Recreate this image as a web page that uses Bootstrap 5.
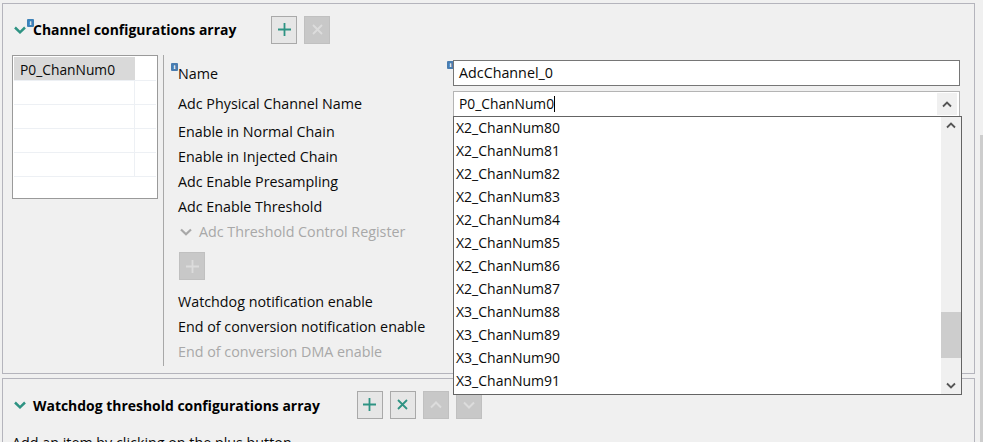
<!doctype html>
<html lang="en"><head><meta charset="utf-8"><title>Channel configurations</title>
<link href="https://cdn.jsdelivr.net/npm/bootstrap@5.3.0/dist/css/bootstrap.min.css" rel="stylesheet">
<style>
html,body{height:442px;overflow:hidden}
body{background:#f0f0f0;color:#0a0a0a;font:14.3px/20px "Open Sans","Noto Sans",sans-serif;position:relative;padding:3px 8px 0 2px}
.pane{border:1px solid #b4b4bc;background:#f0f0f0}
.pane-a{height:371px;padding:12px 9px 0 9px}
.pane-b{height:70px;margin-top:4px;padding:12px 9px 0 9px;border-bottom:0}
.pane-b .title{padding-top:2px}
.head{height:27px;display:flex;align-items:center;position:relative}
.title{font-weight:700;font-size:13.95px;color:#000;margin-left:7px}
.chev{width:12px;height:8px;margin-left:2px;flex:none}
.tool{width:26px;height:28px;border:1px solid #a9a9a9;background:#e6e6e6;display:flex;align-items:center;justify-content:center;padding:0;flex:none}
.tool.off{background:#c8c8c8;border-color:#c0c0c0}
.tools{margin-left:35px;gap:7px}
.pane-b .tools{margin-left:37px}
.info{position:absolute;width:7px;height:8px;background:#4a7db0;color:#fff;font:bold 7px/8px "Liberation Serif",serif;text-align:center;border-radius:1px}
.info-title{left:15px;top:3px;background:#3d82b8}
.main{display:flex;margin-top:12px}
.lst{width:146px;height:144px;flex:none;border:1px solid #9a9a9a;background:#fff;padding:1px}
.lst-row{height:24px;border-bottom:1px solid #edf0f4;display:flex}
.lst-row span{width:121px;padding:3px 0 0 6px;border-right:1px solid #edf0f4;line-height:20px;font-size:13.8px}
.lst-row.sel span{background:#d9d9d9;border-right:0}
.vline{width:1px;height:311px;background:#a8a8a8;margin-left:5px;flex:none}
.form-area{position:relative;flex:1;padding-left:14px}
.lab{display:flex;align-items:center;height:25px;white-space:nowrap}
.dis{color:#a8a8a8}
.r1{height:28px;margin-top:5px}
.r2{height:32px}
.r3{height:24px}
.fld{position:absolute;left:289px;width:507px;background:#fff;padding-left:5px;display:flex;align-items:center}
.fld1{top:5px;height:26px;border:1px solid #767676}
.fld2{top:36px;height:26px;border:1px solid #b4b4b4;justify-content:space-between;padding-right:2px;font-size:13.8px}
.spin{width:20px;height:22px;background:#f0f0f0;display:flex;align-items:center;justify-content:center}
.caret-t{display:inline-block;width:1px;height:16px;background:#000;vertical-align:-3px}
.pop{position:absolute;left:289px;top:61px;width:509px;height:279px;border:1px solid #646464;background:#fff;display:flex;z-index:5;font-size:14px}
.items{flex:1;padding:0 0 0 2px;margin-top:-1px}
.items div{height:23px;line-height:23px}
.sbar{width:20px;background:#f0f0f0;display:flex;flex-direction:column;align-items:center;justify-content:space-between;position:relative;padding:5px 0}
.thumb{position:absolute;left:0;right:0;top:195px;height:46px;background:#cdcdcd}
.add-off{margin:8px 0 9px 1px}
.outer-sb{position:absolute;right:0;top:135px;width:3px;height:307px;background:#cdcdcd}
.hint{margin-top:15px;white-space:nowrap}
.dis-chev{margin:0 7px 0 2px}
</style></head><body>
<section class="pane pane-a">
  <div class="head">
    <svg class="chev" viewBox="0 0 12 8"><path d="M1 1.5 6 6.3 11 1.5" fill="none" stroke="#2e9383" stroke-width="2.5"/></svg>
    <span class="info info-title">i</span>
    <span class="title">Channel configurations array</span>
    <div class="d-flex tools">
      <button class="tool" aria-label="Add"><svg width="15" height="15" viewBox="0 0 15 15"><path d="M7.5 1v13M1 7.5h13" stroke="#2e9383" stroke-width="1.8"/></svg></button>
      <button class="tool off" aria-label="Remove"><svg width="11" height="11" viewBox="0 0 11 11"><path d="M1 1 10 10M10 1 1 10" stroke="#dcdcdc" stroke-width="1.8"/></svg></button>
    </div>
  </div>
  <div class="main">
    <div class="lst">
      <div class="lst-row sel"><span>P0_ChanNum0</span></div>
      <div class="lst-row"><span></span></div>
      <div class="lst-row"><span></span></div>
      <div class="lst-row"><span></span></div>
      <div class="lst-row"><span></span></div>
    </div>
    <div class="vline"></div>
    <div class="form-area">
      <span class="info" style="left:7px;top:8px">i</span>
      <div class="lab r1">Name</div>
      <div class="lab r2">Adc Physical Channel Name</div>
      <div class="lab r3">Enable in Normal Chain</div>
      <div class="lab">Enable in Injected Chain</div>
      <div class="lab">Adc Enable Presampling</div>
      <div class="lab">Adc Enable Threshold</div>
      <div class="lab dis">
        <svg class="dis-chev" width="12" height="8" viewBox="0 0 12 8"><path d="M1 1.5 6 6.3 11 1.5" fill="none" stroke="#a8a8a8" stroke-width="2.2"/></svg>Adc Threshold Control Register
      </div>
      <button class="tool off add-off d-flex" aria-label="Add register"><svg width="15" height="15" viewBox="0 0 15 15"><path d="M7.5 1v13M1 7.5h13" stroke="#dcdcdc" stroke-width="1.8"/></svg></button>
      <div class="lab">Watchdog notification enable</div>
      <div class="lab">End of conversion notification enable</div>
      <div class="lab dis">End of conversion DMA enable</div>

      <span class="info" style="left:283px;top:6px">i</span>
      <div class="fld fld1">AdcChannel_0</div>
      <div class="fld fld2"><span>P0_ChanNum0<i class="caret-t"></i></span>
        <span class="spin"><svg width="10" height="7" viewBox="0 0 10 7"><path d="M1 5.5 5 1.5 9 5.5" fill="none" stroke="#555" stroke-width="1.8"/></svg></span>
      </div>
      <div class="pop">
        <div class="items">
          <div>X2_ChanNum80</div><div>X2_ChanNum81</div><div>X2_ChanNum82</div><div>X2_ChanNum83</div>
          <div>X2_ChanNum84</div><div>X2_ChanNum85</div><div>X2_ChanNum86</div><div>X2_ChanNum87</div>
          <div>X3_ChanNum88</div><div>X3_ChanNum89</div><div>X3_ChanNum90</div><div>X3_ChanNum91</div>
        </div>
        <div class="sbar">
          <svg width="10" height="7" viewBox="0 0 10 7"><path d="M1 5.5 5 1.5 9 5.5" fill="none" stroke="#555" stroke-width="1.8"/></svg>
          <span class="thumb"></span>
          <svg width="10" height="7" viewBox="0 0 10 7"><path d="M1 1.5 5 5.5 9 1.5" fill="none" stroke="#555" stroke-width="1.8"/></svg>
        </div>
      </div>
    </div>
  </div>
</section>
<section class="pane pane-b">
  <div class="head">
    <svg class="chev" viewBox="0 0 12 8"><path d="M1 1.5 6 6.3 11 1.5" fill="none" stroke="#2e9383" stroke-width="2.5"/></svg>
    <span class="title">Watchdog threshold configurations array</span>
    <div class="d-flex tools">
      <button class="tool" aria-label="Add"><svg width="15" height="15" viewBox="0 0 15 15"><path d="M7.5 1v13M1 7.5h13" stroke="#2e9383" stroke-width="1.8"/></svg></button>
      <button class="tool" aria-label="Remove"><svg width="11" height="11" viewBox="0 0 11 11"><path d="M1 1 10 10M10 1 1 10" stroke="#2e9383" stroke-width="1.8"/></svg></button>
      <button class="tool off" aria-label="Up"><svg width="12" height="8" viewBox="0 0 12 8"><path d="M1 6.5 6 1.5 11 6.5" fill="none" stroke="#dcdcdc" stroke-width="2"/></svg></button>
      <button class="tool off" aria-label="Down"><svg width="12" height="8" viewBox="0 0 12 8"><path d="M1 1.5 6 6.5 11 1.5" fill="none" stroke="#dcdcdc" stroke-width="2"/></svg></button>
    </div>
  </div>
  <div class="hint">Add an item by clicking on the plus button</div>
</section>
<div class="outer-sb"></div>
</body></html>
